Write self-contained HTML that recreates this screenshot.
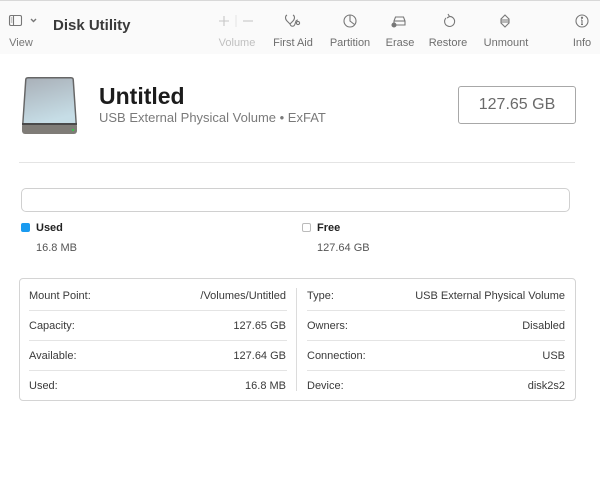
<!DOCTYPE html>
<html><head><meta charset="utf-8"><style>
*{margin:0;padding:0;box-sizing:border-box}
body{width:600px;height:502px;background:#fff;font-family:"Liberation Sans",sans-serif;position:relative;overflow:hidden;color:#262626}
.a{position:absolute;white-space:nowrap}
.tb{position:absolute;left:0;top:0;width:600px;height:54px;background:#fafafa;border-top:1px solid #d8d8d8}
.lbl{position:absolute;top:36px;font-size:11px;color:#6e6e6e;transform:translateX(-50%)}
.ic{position:absolute;top:12px}
.row{position:absolute;font-size:11px;color:#3a3a3a}
.sep{position:absolute;height:1px;background:#e4e4e4}
</style></head><body>
<div class="tb">
<svg class="ic" style="left:8px;top:13px" width="34" height="14" viewBox="0 0 34 14" fill="none" stroke="#777" stroke-width="1.1"><rect x="1.5" y="1.5" width="12" height="10" rx="1.5"/><line x1="5.5" y1="1.5" x2="5.5" y2="11.5"/><path d="M2.8 4h1.5M2.8 6h1.5M2.8 8h1.5" stroke-width="0.8"/><path d="M23 5l2.5 2.5L28 5" stroke-width="1.4"/></svg>
<div class="lbl" style="left:21px;color:#777">View</div>
<div class="a" style="left:53px;top:16px;font-size:15px;font-weight:bold;color:#3a3a3a">Disk Utility</div>
<svg class="ic" style="left:216px" width="40" height="16" viewBox="0 0 40 16" stroke="#c6c6c6" stroke-width="1.1"><path d="M8 3v10M3 8h10"/><path d="M20 2v12" stroke="#e6e6e6"/><path d="M27 8h10"/></svg>
<div class="lbl" style="left:237px;color:#c0c0c0">Volume</div>
<svg class="ic" style="left:284px" width="18" height="16" viewBox="0 0 18 16" fill="none" stroke="#777" stroke-width="1.1"><path d="M3 2C1 3 1 6 3 8l3 3 3-3c2-2 2-5 0-6"/><path d="M6 11c1 3 4 3 5 0s1-4 3-4"/><circle cx="14" cy="10" r="1.6"/></svg>
<div class="lbl" style="left:293px">First Aid</div>
<svg class="ic" style="left:342px" width="16" height="16" viewBox="0 0 16 16" fill="none" stroke="#777" stroke-width="1.1"><circle cx="8" cy="8" r="6"/><path d="M8 2v6l4.5 3.5"/></svg>
<div class="lbl" style="left:350px">Partition</div>
<svg class="ic" style="left:390px" width="18" height="16" viewBox="0 0 18 16" fill="none" stroke="#777" stroke-width="1.1"><path d="M4 8l1.5-4h8L15 8v4H4z"/><path d="M4 8h11"/><circle cx="4" cy="12" r="2" fill="#777"/></svg>
<div class="lbl" style="left:400px">Erase</div>
<svg class="ic" style="left:441px" width="16" height="16" viewBox="0 0 16 16" fill="none" stroke="#777" stroke-width="1.1"><path d="M5 5a5 5 0 1 0 3-1.5"/><path d="M7 1l1.5 2.5L6 5"/></svg>
<div class="lbl" style="left:448px">Restore</div>
<svg class="ic" style="left:498px" width="14" height="16" viewBox="0 0 14 16" fill="none" stroke="#777" stroke-width="1.1"><path d="M7 2L3 6v4l4 4 4-4V6z"/><path d="M3 7h8M3 9h8"/></svg>
<div class="lbl" style="left:506px">Unmount</div>
<svg class="ic" style="left:574px" width="16" height="16" viewBox="0 0 16 16" fill="none" stroke="#777" stroke-width="1.1"><circle cx="8" cy="8" r="6"/><path d="M8 7v4.5M7 11.5h2M7 7h1"/><circle cx="8" cy="4.8" r="0.6" fill="#777"/></svg>
<div class="lbl" style="left:582px">Info</div>
</div>

<svg class="a" style="left:20px;top:76px" width="60" height="62" viewBox="0 0 60 62"><defs><linearGradient id="g" x1="0" y1="0" x2="0.3" y2="1"><stop offset="0" stop-color="#a9b0b8"/><stop offset="1" stop-color="#c6dde6"/></linearGradient></defs><path d="M5 4Q5 1 8 1H51Q54 1 54 4L57 49H2Z" fill="#666"/><path d="M6.5 4Q6.5 2.5 8 2.5H51Q52.5 2.5 52.5 4L55.5 48H3.5Z" fill="url(#g)"/><rect x="2" y="47" width="55" height="11" rx="3" fill="#7f7c77"/><rect x="2" y="47" width="55" height="2" fill="#4a4a4a"/><circle cx="53" cy="54" r="1.2" fill="#35c84a"/></svg>
<div class="a" style="left:99px;top:83px;font-size:23px;font-weight:bold;color:#1c1c1c">Untitled</div>
<div class="a" style="left:99px;top:110px;font-size:13px;color:#7a7a7a">USB External Physical Volume • ExFAT</div>
<div class="a" style="left:458px;top:86px;width:118px;height:38px;border:1px solid #a8a8a8;border-radius:3px;font-size:16px;color:#6a6a6a;text-align:center;line-height:36px">127.65 GB</div>
<div class="sep" style="left:19px;top:162px;width:556px"></div>
<div class="a" style="left:21px;top:188px;width:549px;height:24px;border:1px solid #d0d0d0;border-radius:5px"></div>
<div class="a" style="left:21px;top:223px;width:9px;height:9px;border-radius:2px;background:#1a9bf0"></div>
<div class="a" style="left:36px;top:222px;font-size:11px;font-weight:bold;color:#222">Used</div>
<div class="a" style="left:36px;top:242px;font-size:11px;color:#555">16.8 MB</div>
<div class="a" style="left:302px;top:223px;width:9px;height:9px;border-radius:2px;border:1px solid #bbb"></div>
<div class="a" style="left:317px;top:222px;font-size:11px;font-weight:bold;color:#222">Free</div>
<div class="a" style="left:317px;top:242px;font-size:11px;color:#555">127.64 GB</div>

<div class="a" style="left:19px;top:278px;width:557px;height:123px;border:1px solid #d4d4d4;border-radius:4px"></div>
<div class="a" style="left:296px;top:288px;width:1px;height:103px;background:#dcdcdc"></div>
<div class="sep" style="left:29px;top:310px;width:258px"></div>
<div class="sep" style="left:29px;top:340px;width:258px"></div>
<div class="sep" style="left:29px;top:370px;width:258px"></div>
<div class="sep" style="left:307px;top:310px;width:258px"></div>
<div class="sep" style="left:307px;top:340px;width:258px"></div>
<div class="sep" style="left:307px;top:370px;width:258px"></div>

<div class="row" style="left:29px;top:290px">Mount Point:</div><div class="row" style="right:314px;top:290px">/Volumes/Untitled</div>
<div class="row" style="left:29px;top:320px">Capacity:</div><div class="row" style="right:314px;top:320px">127.65 GB</div>
<div class="row" style="left:29px;top:350px">Available:</div><div class="row" style="right:314px;top:350px">127.64 GB</div>
<div class="row" style="left:29px;top:380px">Used:</div><div class="row" style="right:314px;top:380px">16.8 MB</div>
<div class="row" style="left:307px;top:290px">Type:</div><div class="row" style="right:35px;top:290px">USB External Physical Volume</div>
<div class="row" style="left:307px;top:320px">Owners:</div><div class="row" style="right:35px;top:320px">Disabled</div>
<div class="row" style="left:307px;top:350px">Connection:</div><div class="row" style="right:35px;top:350px">USB</div>
<div class="row" style="left:307px;top:380px">Device:</div><div class="row" style="right:35px;top:380px">disk2s2</div>
</body></html>
